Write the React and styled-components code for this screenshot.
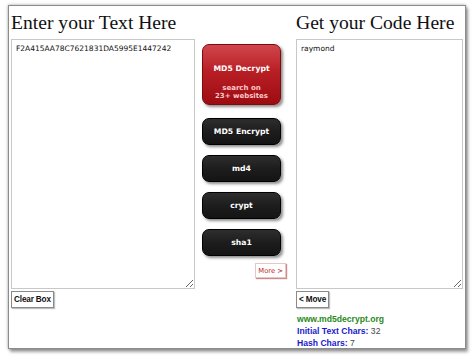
import React from "react";
import styled, { createGlobalStyle } from "styled-components";

const Global = createGlobalStyle`
  html, body { margin: 0; padding: 0; background: #ffffff; }
  body { width: 474px; height: 357px; overflow: hidden; font-family: "Liberation Sans", Arial, sans-serif; }
`;

const Frame = styled.div`
  margin: 5px 0 0 8px;
  width: 454px;
  height: 342px;
  border: 1px solid #8c8c8c;
  background: #fff;
  box-shadow: 0 0 3px rgba(0,0,0,0.35), 2px 3px 3px rgba(0,0,0,0.35);
  display: grid;
  grid-template-columns: 184px 101px 167px;
  padding-left: 2px;
  box-sizing: content-box;
`;

const Column = styled.div`
  display: flex;
  flex-direction: column;
  align-items: flex-start;
`;

const Heading = styled.h1`
  margin: 0;
  height: 33px;
  padding-top: 4px;
  box-sizing: border-box;
  font-family: "Liberation Serif", "Times New Roman", serif;
  font-weight: normal;
  font-size: 19.6px;
  line-height: 26px;
  color: #111;
  white-space: nowrap;
`;

const TextBox = styled.textarea`
  display: block;
  width: ${p => p.$w}px;
  height: 250px;
  margin: 0;
  box-sizing: border-box;
  border: 1px solid #c8c8c8;
  padding: 4px 4px;
  font-family: "DejaVu Sans", Verdana, sans-serif;
  font-size: 7.5px;
  line-height: 10px;
  color: #111;
  resize: both;
  outline: none;
`;

const PlainButton = styled.button`
  margin-top: 2px;
  height: 17px;
  padding: 0 2px;
  border: 1px solid #8a8a8a;
  background: #fff;
  box-shadow: 1px 1px 1px rgba(0,0,0,0.25);
  font-family: "Liberation Sans", Arial, sans-serif;
  font-weight: bold;
  font-size: 8.2px;
  color: #111;
  letter-spacing: -0.15px;
  cursor: pointer;
`;

const Middle = styled.div`
  display: flex;
  flex-direction: column;
  align-items: flex-start;
  padding: 38px 0 0 7px;
  gap: 10px;
`;

const ActionButton = styled.button`
  width: 79px;
  height: ${p => (p.$tall ? 61 : 27)}px;
  border-radius: 7px;
  border: 1px solid ${p => (p.$red ? "#7c0a0e" : "#000")};
  background: ${p =>
    p.$red
      ? "linear-gradient(#d0464b 0%, #b81f25 45%, #9c0c11 100%)"
      : "linear-gradient(#2e2e2e 0%, #1d1d1d 50%, #141414 100%)"};
  box-shadow: 2px 2px 3px rgba(0,0,0,0.45);
  color: #fff;
  font-family: "DejaVu Sans", Verdana, sans-serif;
  font-weight: bold;
  font-size: 7.7px;
  display: flex;
  flex-direction: column;
  align-items: center;
  justify-content: ${p => (p.$tall ? "flex-start" : "center")};
  padding: ${p => (p.$tall ? "19px 0 0" : "0")};
  margin-bottom: ${p => (p.$tall ? "3px" : "0")};
  cursor: pointer;
`;

const SubNote = styled.span`
  margin-top: 11px;
  font-size: 7px;
  line-height: 8px;
  color: #ffc9c9;
  text-align: center;
`;

const MoreButton = styled.button`
  align-self: flex-end;
  margin: -3px 10px 0 0;
  height: 15px;
  padding: 0 2px;
  border: 1px solid #e6c6c6;
  background: #fff;
  box-shadow: 1px 1px 1px rgba(170,40,40,0.55);
  color: #c22a2a;
  font-family: "DejaVu Sans", Verdana, sans-serif;
  font-size: 6.8px;
  cursor: pointer;
`;

const Info = styled.div`
  margin-top: 5px;
  padding-left: 1px;
  font-family: "Liberation Sans", Arial, sans-serif;
  font-size: 8.6px;
  line-height: 12px;
`;

const Line = styled.div`
  color: ${p => p.$color || "#1a1acc"};
  font-weight: bold;
  white-space: nowrap;
`;

const Val = styled.span`
  color: #444;
  font-weight: normal;
`;

export default function App() {
  return (
    <>
      <Global />
      <Frame>
        <Column>
          <Heading>Enter your Text Here</Heading>
          <TextBox $w={184} defaultValue="F2A415AA78C7621831DA5995E1447242" />
          <PlainButton>Clear Box</PlainButton>
        </Column>
        <Middle>
          <ActionButton $red $tall>
            MD5 Decrypt
            <SubNote>search on<br />23+ websites</SubNote>
          </ActionButton>
          <ActionButton>MD5 Encrypt</ActionButton>
          <ActionButton>md4</ActionButton>
          <ActionButton>crypt</ActionButton>
          <ActionButton>sha1</ActionButton>
          <MoreButton>More &gt;</MoreButton>
        </Middle>
        <Column>
          <Heading>Get your Code Here</Heading>
          <TextBox $w={167} defaultValue="raymond" />
          <PlainButton>&lt; Move</PlainButton>
          <Info>
            <Line $color="#2a8a22">www.md5decrypt.org</Line>
            <Line>Initial Text Chars: <Val>32</Val></Line>
            <Line>Hash Chars: <Val>7</Val></Line>
          </Info>
        </Column>
      </Frame>
    </>
  );
}
